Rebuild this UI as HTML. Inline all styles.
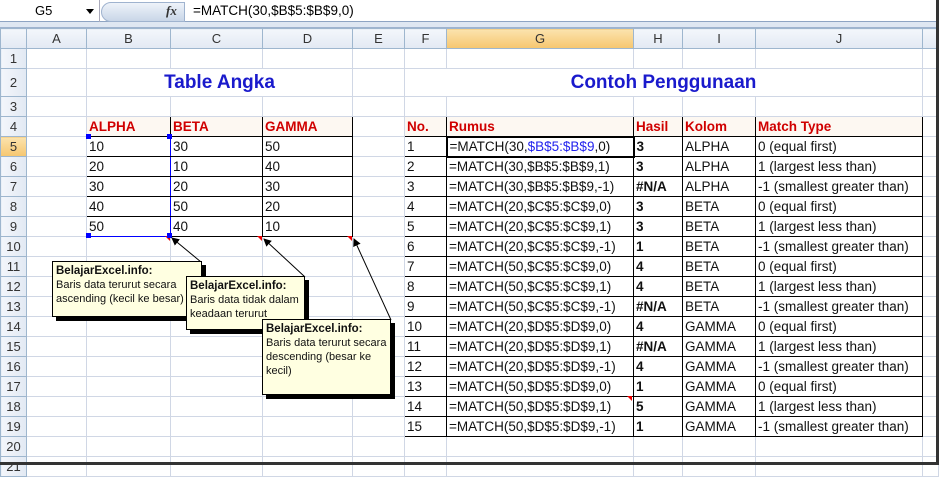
<!DOCTYPE html>
<html><head><meta charset="utf-8"><style>
*{margin:0;padding:0;box-sizing:border-box}
body{width:939px;height:465px;overflow:hidden;background:#fff;font-family:"Liberation Sans",sans-serif;position:relative}
#fb{position:absolute;left:0;top:0;width:939px;height:22px;background:#fff;border-bottom:1px solid #8ea4c3}
#band{position:absolute;left:0;top:22px;width:939px;height:6px;background:#dfe7f2;border-bottom:1px solid #9fb3cf}
table{position:absolute;left:0;top:28px;border-collapse:collapse;table-layout:fixed;width:939px}
td{border:1px solid #d0d7e5;height:20px;font-size:13.5px;color:#111;padding:0 2px;white-space:nowrap;overflow:visible;line-height:18px;vertical-align:bottom}
tr.h td{background:linear-gradient(#f3f6fb,#e2e9f3);border-color:#9eb6ce;text-align:center;color:#333;font-size:13px;vertical-align:middle}
td.rh{background:linear-gradient(90deg,#f3f6fb,#e2e9f3);border-color:#9eb6ce;text-align:center;color:#333;font-size:13px;vertical-align:middle;padding:0}
td.sel{background:linear-gradient(#fbe3ae,#f6c66f)!important}
.b{border:1px solid #000}
.hd{background:#fdf8f2;color:#d00000;font-weight:bold}
.bo{font-weight:bold}
.t{color:#1a1acc;font-weight:bold;font-size:19px;text-align:center;vertical-align:middle}
.note{position:absolute;background:#ffffe1;border:1px solid #000;box-shadow:4px 4px 0 #000;font-size:11px;line-height:14px;padding:2px 3px;color:#111}
.note b{display:block;font-size:11.5px}
.tri{position:absolute;width:0;height:0;border-top:5px solid #e00;border-left:5px solid transparent}
</style></head><body>
<div id="fb">
<div style="position:absolute;left:0;top:0;width:100px;height:22px;border-right:1px solid #aab">
<span style="position:absolute;left:35px;top:3px;font-size:13px">G5</span>
<span style="position:absolute;left:86px;top:9px;border-top:5px solid #000;border-left:4px solid transparent;border-right:4px solid transparent"></span></div>
<div style="position:absolute;left:101px;top:2px;width:84px;height:20px;border-radius:10px 0 0 10px;background:linear-gradient(#eef3fa,#c9d6e8);border:1px solid #9fb3cf"></div>
<span style="position:absolute;left:166px;top:3px;font-style:italic;font-family:'Liberation Serif',serif;font-size:13px;font-weight:bold;color:#333">fx</span>
<span style="position:absolute;left:193px;top:3px;font-size:13.5px">=MATCH(30,$B$5:$B$9,0)</span>
</div>
<div id="band"></div>
<table>
<colgroup><col style="width:26px"><col style="width:60px"><col style="width:84px"><col style="width:92px"><col style="width:90px"><col style="width:52px"><col style="width:42px"><col style="width:187px"><col style="width:49px"><col style="width:73px"><col style="width:167px"><col></colgroup>
<tr class="h"><td></td><td>A</td><td>B</td><td>C</td><td>D</td><td>E</td><td>F</td><td class="sel">G</td><td>H</td><td>I</td><td>J</td><td></td></tr>
<tr><td class="rh">1</td><td></td><td></td><td></td><td></td><td></td><td></td><td></td><td></td><td></td><td></td><td></td></tr>
<tr style="height:28px"><td class="rh" style="height:28px">2</td><td></td><td colspan="3" class="t">Table Angka</td><td></td><td colspan="5" class="t">Contoh Penggunaan</td><td></td></tr>
<tr><td class="rh">3</td><td></td><td></td><td></td><td></td><td></td><td></td><td></td><td></td><td></td><td></td><td></td></tr>
<tr><td class="rh">4</td><td></td><td class="b hd">ALPHA</td><td class="b hd">BETA</td><td class="b hd">GAMMA</td><td></td><td class="b hd">No.</td><td class="b hd">Rumus</td><td class="b hd">Hasil</td><td class="b hd">Kolom</td><td class="b hd">Match Type</td><td></td></tr>
<tr><td class="rh sel">5</td><td></td><td class="b" style="border:1px solid #00f;border-bottom-color:#000">10</td><td class="b">30</td><td class="b">50</td><td></td><td class="b">1</td><td class="b" style="border:2px solid #000">=MATCH(30,<span style="color:#2222ee">$B$5:$B$9</span>,0)</td><td class="b bo">3</td><td class="b">ALPHA</td><td class="b">0 (equal first)</td><td></td></tr>
<tr><td class="rh">6</td><td></td><td class="b" style="border-left-color:#00f;border-right-color:#00f">20</td><td class="b">10</td><td class="b">40</td><td></td><td class="b">2</td><td class="b">=MATCH(30,$B$5:$B$9,1)</td><td class="b bo">3</td><td class="b">ALPHA</td><td class="b">1 (largest less than)</td><td></td></tr>
<tr><td class="rh">7</td><td></td><td class="b" style="border-left-color:#00f;border-right-color:#00f">30</td><td class="b">20</td><td class="b">30</td><td></td><td class="b">3</td><td class="b">=MATCH(30,$B$5:$B$9,-1)</td><td class="b bo">#N/A</td><td class="b">ALPHA</td><td class="b">-1 (smallest greater than)</td><td></td></tr>
<tr><td class="rh">8</td><td></td><td class="b" style="border-left-color:#00f;border-right-color:#00f">40</td><td class="b">50</td><td class="b">20</td><td></td><td class="b">4</td><td class="b">=MATCH(20,$C$5:$C$9,0)</td><td class="b bo">3</td><td class="b">BETA</td><td class="b">0 (equal first)</td><td></td></tr>
<tr><td class="rh">9</td><td></td><td class="b" style="border:1px solid #00f">50</td><td class="b">40</td><td class="b">10</td><td></td><td class="b">5</td><td class="b">=MATCH(20,$C$5:$C$9,1)</td><td class="b bo">3</td><td class="b">BETA</td><td class="b">1 (largest less than)</td><td></td></tr>
<tr><td class="rh">10</td><td></td><td></td><td></td><td></td><td></td><td class="b">6</td><td class="b">=MATCH(20,$C$5:$C$9,-1)</td><td class="b bo">1</td><td class="b">BETA</td><td class="b">-1 (smallest greater than)</td><td></td></tr>
<tr><td class="rh">11</td><td></td><td></td><td></td><td></td><td></td><td class="b">7</td><td class="b">=MATCH(50,$C$5:$C$9,0)</td><td class="b bo">4</td><td class="b">BETA</td><td class="b">0 (equal first)</td><td></td></tr>
<tr><td class="rh">12</td><td></td><td></td><td></td><td></td><td></td><td class="b">8</td><td class="b">=MATCH(50,$C$5:$C$9,1)</td><td class="b bo">4</td><td class="b">BETA</td><td class="b">1 (largest less than)</td><td></td></tr>
<tr><td class="rh">13</td><td></td><td></td><td></td><td></td><td></td><td class="b">9</td><td class="b">=MATCH(50,$C$5:$C$9,-1)</td><td class="b bo">#N/A</td><td class="b">BETA</td><td class="b">-1 (smallest greater than)</td><td></td></tr>
<tr><td class="rh">14</td><td></td><td></td><td></td><td></td><td></td><td class="b">10</td><td class="b">=MATCH(20,$D$5:$D$9,0)</td><td class="b bo">4</td><td class="b">GAMMA</td><td class="b">0 (equal first)</td><td></td></tr>
<tr><td class="rh">15</td><td></td><td></td><td></td><td></td><td></td><td class="b">11</td><td class="b">=MATCH(20,$D$5:$D$9,1)</td><td class="b bo">#N/A</td><td class="b">GAMMA</td><td class="b">1 (largest less than)</td><td></td></tr>
<tr><td class="rh">16</td><td></td><td></td><td></td><td></td><td></td><td class="b">12</td><td class="b">=MATCH(20,$D$5:$D$9,-1)</td><td class="b bo">4</td><td class="b">GAMMA</td><td class="b">-1 (smallest greater than)</td><td></td></tr>
<tr><td class="rh">17</td><td></td><td></td><td></td><td></td><td></td><td class="b">13</td><td class="b">=MATCH(50,$D$5:$D$9,0)</td><td class="b bo">1</td><td class="b">GAMMA</td><td class="b">0 (equal first)</td><td></td></tr>
<tr><td class="rh">18</td><td></td><td></td><td></td><td></td><td></td><td class="b">14</td><td class="b">=MATCH(50,$D$5:$D$9,1)</td><td class="b bo">5</td><td class="b">GAMMA</td><td class="b">1 (largest less than)</td><td></td></tr>
<tr><td class="rh">19</td><td></td><td></td><td></td><td></td><td></td><td class="b">15</td><td class="b">=MATCH(50,$D$5:$D$9,-1)</td><td class="b bo">1</td><td class="b">GAMMA</td><td class="b">-1 (smallest greater than)</td><td></td></tr>
<tr><td class="rh">20</td><td></td><td></td><td></td><td></td><td></td><td></td><td></td><td></td><td></td><td></td><td></td></tr>
<tr><td class="rh">21</td><td></td><td></td><td></td><td></td><td></td><td></td><td></td><td></td><td></td><td></td><td></td></tr>
</table>
<div class="tri" style="left:165px;top:236px"></div>
<div class="tri" style="left:257px;top:236px"></div>
<div class="tri" style="left:347px;top:236px"></div>
<div class="tri" style="left:627px;top:396px"></div>
<div style="position:absolute;left:86px;top:134px;width:5px;height:5px;background:#00f"></div>
<div style="position:absolute;left:167px;top:134px;width:5px;height:5px;background:#00f"></div>
<div style="position:absolute;left:86px;top:233px;width:5px;height:5px;background:#00f"></div>
<div style="position:absolute;left:167px;top:233px;width:5px;height:5px;background:#00f"></div>
<svg style="position:absolute;left:0;top:0" width="939" height="465">
<defs><marker id="a" markerWidth="8" markerHeight="8" refX="7" refY="4" orient="auto"><path d="M0,0 L8,4 L0,8 z" fill="#000"/></marker></defs>
<line x1="201" y1="262" x2="172" y2="238" stroke="#000" stroke-width="1" marker-end="url(#a)"/>
<line x1="305" y1="277" x2="264" y2="239" stroke="#000" stroke-width="1" marker-end="url(#a)"/>
<line x1="391" y1="320" x2="354" y2="239" stroke="#000" stroke-width="1" marker-end="url(#a)"/>
</svg>
<div class="note" style="left:52px;top:261px;width:150px;height:56px"><b>BelajarExcel.info:</b>Baris data terurut secara ascending (kecil ke besar)</div>
<div class="note" style="left:186px;top:276px;width:119px;height:54px"><b>BelajarExcel.info:</b>Baris data tidak dalam keadaan terurut</div>
<div class="note" style="left:262px;top:319px;width:129px;height:76px"><b>BelajarExcel.info:</b>Baris data terurut secara descending (besar ke kecil)</div>
<div style="position:absolute;left:0;top:462px;width:939px;height:3px;background:#333"></div>
<div style="position:absolute;left:936px;top:0;width:3px;height:465px;background:#333"></div>
</body></html>
